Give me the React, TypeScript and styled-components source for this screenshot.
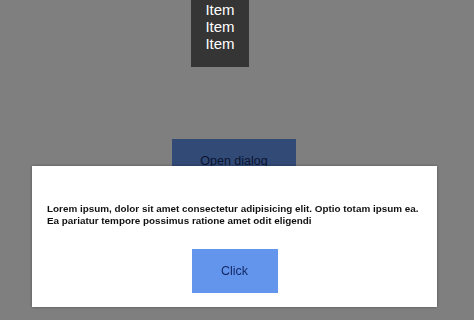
import React from "react";
import styled, { createGlobalStyle } from "styled-components";

const GlobalStyle = createGlobalStyle`
  html, body { margin: 0; padding: 0; }
  body {
    background: #ffffff;
    font-family: "Liberation Sans", Arial, sans-serif;
    width: 474px;
    height: 320px;
    overflow: hidden;
  }
`;

const Page = styled.main`
  position: relative;
  width: 474px;
  height: 320px;
  box-sizing: border-box;
  padding: 139px 6px 0 0;
  display: flex;
  flex-direction: column;
  align-items: center;
`;

const Button = styled.button<{ $size?: "wide" | "normal" }>`
  border: none;
  margin: 0;
  background: #6495ed;
  color: #142a66;
  font-family: "Liberation Sans", Arial, sans-serif;
  font-size: 12.5px;
  line-height: 14px;
  height: 44px;
  width: ${(p) => (p.$size === "wide" ? "124px" : "86px")};
  padding: 0;
  cursor: pointer;
`;

const Menu = styled.ul`
  position: absolute;
  z-index: 3;
  top: 0;
  left: 191px;
  width: 58px;
  margin: 0;
  padding: 1px 0 15px;
  list-style: none;
  background: #353535;
  box-sizing: border-box;
`;

const MenuItem = styled.li`
  color: #ffffff;
  font-size: 15px;
  line-height: 17px;
  text-align: center;
`;

const Backdrop = styled.div`
  position: fixed;
  inset: 0;
  z-index: 2;
  background: rgba(0, 0, 0, 0.5);
  box-sizing: border-box;
  padding: 166px 5px 0 0;
  display: flex;
  justify-content: center;
  align-items: flex-start;
`;

const Dialog = styled.div`
  width: 405px;
  height: 141px;
  box-sizing: border-box;
  background: #ffffff;
  box-shadow: 0 0 3px rgba(0, 0, 0, 0.35);
  padding: 37px 15px 0;
  display: flex;
  flex-direction: column;
  align-items: center;
`;

const Text = styled.p`
  align-self: stretch;
  margin: 0 0 23px;
  font-size: 9.9px;
  line-height: 11.7px;
  font-weight: 700;
  color: #111111;
`;

export default function App() {
  return (
    <>
      <GlobalStyle />
      <Page>
        <Button $size="wide">Open dialog</Button>
      </Page>
      <Menu>
        <MenuItem>Item</MenuItem>
        <MenuItem>Item</MenuItem>
        <MenuItem>Item</MenuItem>
      </Menu>
      <Backdrop>
        <Dialog role="dialog">
          <Text>
            Lorem ipsum, dolor sit amet consectetur adipisicing elit. Optio totam ipsum ea.
            Ea pariatur tempore possimus ratione amet odit eligendi
          </Text>
          <Button>Click</Button>
        </Dialog>
      </Backdrop>
    </>
  );
}
